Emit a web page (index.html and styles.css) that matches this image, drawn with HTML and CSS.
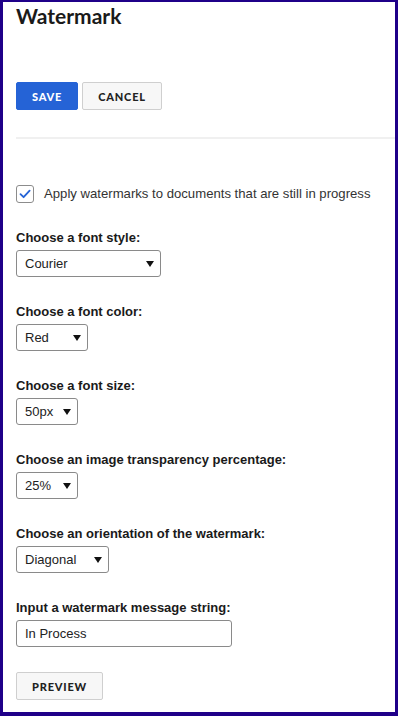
FILE: index.html
```html
<!DOCTYPE html>
<html lang="en">
<head>
  <meta charset="UTF-8">
  <title>Watermark</title>
  <link rel="stylesheet" href="styles.css">
</head>
<body>
  <div class="frame">
    <h1 class="title">Watermark</h1>

    <div class="actions">
      <button class="btn btn-primary">Save</button>
      <button class="btn">Cancel</button>
    </div>

    <hr class="divider">

    <label class="check-row">
      <span class="checkbox">
        <svg width="12" height="10" viewBox="0 0 12 10"><path d="M1.5 5.2 L4.6 8.2 L10.6 1.6" fill="none" stroke="#2563d6" stroke-width="1.8" stroke-linecap="round" stroke-linejoin="round"/></svg>
      </span>
      Apply watermarks to documents that are still in progress
    </label>

    <div class="field">
      <label class="field-label">Choose a font style:</label>
      <div class="select w-style"><span>Courier</span></div>
    </div>

    <div class="field">
      <label class="field-label">Choose a font color:</label>
      <div class="select w-color"><span>Red</span></div>
    </div>

    <div class="field">
      <label class="field-label">Choose a font size:</label>
      <div class="select w-size"><span>50px</span></div>
    </div>

    <div class="field">
      <label class="field-label">Choose an image transparency percentage:</label>
      <div class="select w-size"><span>25%</span></div>
    </div>

    <div class="field">
      <label class="field-label">Choose an orientation of the watermark:</label>
      <div class="select w-orient"><span>Diagonal</span></div>
    </div>

    <div class="field">
      <label class="field-label">Input a watermark message string:</label>
      <input type="text" class="text-input" value="In Process">
    </div>

    <button class="btn preview">Preview</button>
  </div>
</body>
</html>
```

FILE: styles.css
```css
html, body {
  margin: 0;
  padding: 0;
}

body {
  font-family: "Liberation Sans", Arial, sans-serif;
  font-size: 13px;
  color: #222;
  background: white;
}

.frame {
  box-sizing: border-box;
  width: 398px;
  height: 716px;
  border: 3px solid #1f0089;
  border-top-width: 2px;
  border-bottom-width: 4px;
  padding: 0 0 0 13px;
  overflow: hidden;
}

.title {
  font-family: Lato, sans-serif;
  font-weight: 700;
  font-size: 21px;
  line-height: 28px;
  margin: 0;
  color: #1a1a1a;
}

.actions {
  display: flex;
  gap: 4px;
  margin-top: 52px;
}

.btn {
  font-family: Lato, sans-serif;
  font-weight: 900;
  font-size: 11px;
  letter-spacing: 0.8px;
  text-transform: uppercase;
  height: 28px;
  padding: 0 15px;
  border: 1px solid #cfcfcf;
  border-radius: 2px;
  background: #f7f7f7;
  color: #222;
  cursor: pointer;
}

.btn-primary {
  background: #2563d6;
  border-color: #2563d6;
  color: white;
}

.divider {
  border: none;
  height: 2px;
  background: #f0f0f0;
  margin: 27px 0 0 0;
}

.check-row {
  display: flex;
  align-items: center;
  gap: 10px;
  margin-top: 46px;
  color: #333;
  font-size: 13.15px;
  line-height: 18px;
}

.checkbox {
  box-sizing: border-box;
  width: 18px;
  height: 18px;
  border: 1px solid #8c8c8c;
  border-radius: 3px;
  display: flex;
  align-items: center;
  justify-content: center;
}

.field {
  margin-top: 27px;
}

.field-label {
  display: block;
  font-weight: bold;
  line-height: 16px;
  margin-bottom: 4px;
  color: #1a1a1a;
}

.select {
  position: relative;
  box-sizing: border-box;
  height: 27px;
  border: 1px solid #8a8a8a;
  border-radius: 3px;
  padding: 0 8px;
  display: flex;
  align-items: center;
  background: white;
}

.select::after {
  content: "";
  position: absolute;
  right: 6px;
  top: 10px;
  border-left: 4.5px solid transparent;
  border-right: 4.5px solid transparent;
  border-top: 6px solid #111;
}

.w-style { width: 145px; }
.w-color { width: 72px; }
.w-size { width: 62px; }
.w-orient { width: 93px; }

.text-input {
  display: block;
  box-sizing: border-box;
  width: 216px;
  height: 27px;
  border: 1px solid #8a8a8a;
  border-radius: 3px;
  padding: 0 8px;
  font-family: "Liberation Sans", Arial, sans-serif;
  font-size: 13px;
  color: #222;
}

.preview {
  margin-top: 25px;
}
```
